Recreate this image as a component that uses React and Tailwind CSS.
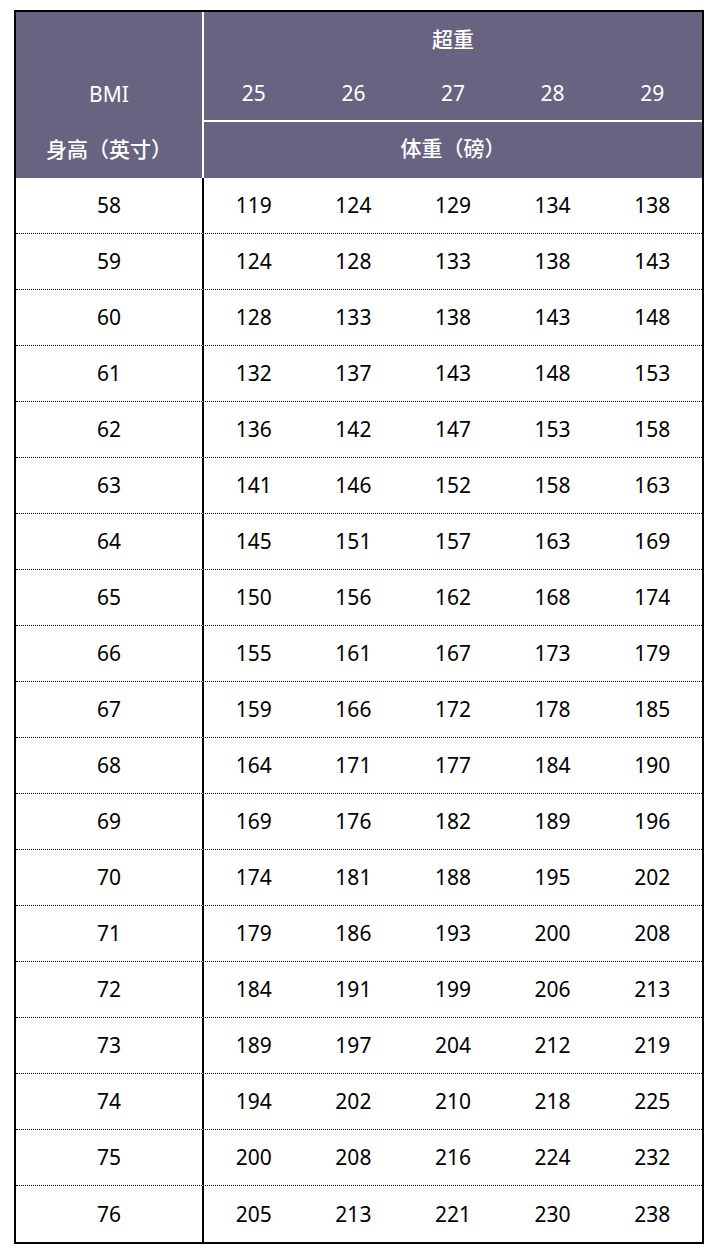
import React from "react";

const rows = [
  [58, 119, 124, 129, 134, 138],
  [59, 124, 128, 133, 138, 143],
  [60, 128, 133, 138, 143, 148],
  [61, 132, 137, 143, 148, 153],
  [62, 136, 142, 147, 153, 158],
  [63, 141, 146, 152, 158, 163],
  [64, 145, 151, 157, 163, 169],
  [65, 150, 156, 162, 168, 174],
  [66, 155, 161, 167, 173, 179],
  [67, 159, 166, 172, 178, 185],
  [68, 164, 171, 177, 184, 190],
  [69, 169, 176, 182, 189, 196],
  [70, 174, 181, 188, 195, 202],
  [71, 179, 186, 193, 200, 208],
  [72, 184, 191, 199, 206, 213],
  [73, 189, 197, 204, 212, 219],
  [74, 194, 202, 210, 218, 225],
  [75, 200, 208, 216, 224, 232],
  [76, 205, 213, 221, 230, 238],
];

const font = {
  fontFamily: '"Noto Sans", "Noto Sans CJK SC", sans-serif',
};

export default function App() {
  return (
    <div className="w-[716px] h-[1256px] bg-white overflow-hidden pt-[10px] pl-[14px]" style={font}>
      <div className="w-[690px] border-2 border-black text-[21px] font-[450] text-black">
        {/* header */}
        <div className="flex h-[166px] bg-[#686380] text-white">
          <div className="w-[188px] border-r-2 border-white flex flex-col">
            <div className="h-[54px]" />
            <div className="h-[56px] flex items-center justify-center pt-[2px]">BMI</div>
            <div className="h-[56px] flex items-center justify-center text-[21px] font-medium">身高（英寸）</div>
          </div>
          <div className="flex-1 flex flex-col">
            <div className="h-[54px] flex items-center justify-center text-[21px] font-medium pt-[2px]">超重</div>
            <div className="h-[56px] grid grid-cols-5 border-b-2 border-white">
              {[25, 26, 27, 28, 29].map((n) => (
                <div key={n} className="flex items-center justify-center pt-[2px]">{n}</div>
              ))}
            </div>
            <div className="h-[54px] flex items-center justify-center text-[21px] font-medium">体重（磅）</div>
          </div>
        </div>
        {/* body */}
        {rows.map((r, i) => (
          <div
            key={r[0]}
            className={
              "flex h-[56px] " +
              (i < rows.length - 1 ? "border-b border-dotted border-black" : "")
            }
          >
            <div className="w-[188px] border-r-2 border-black flex items-center justify-center pt-[1px]">
              {r[0]}
            </div>
            <div className="flex-1 grid grid-cols-5">
              {r.slice(1).map((v, j) => (
                <div key={j} className="flex items-center justify-center pt-[1px]">{v}</div>
              ))}
            </div>
          </div>
        ))}
      </div>
    </div>
  );
}
